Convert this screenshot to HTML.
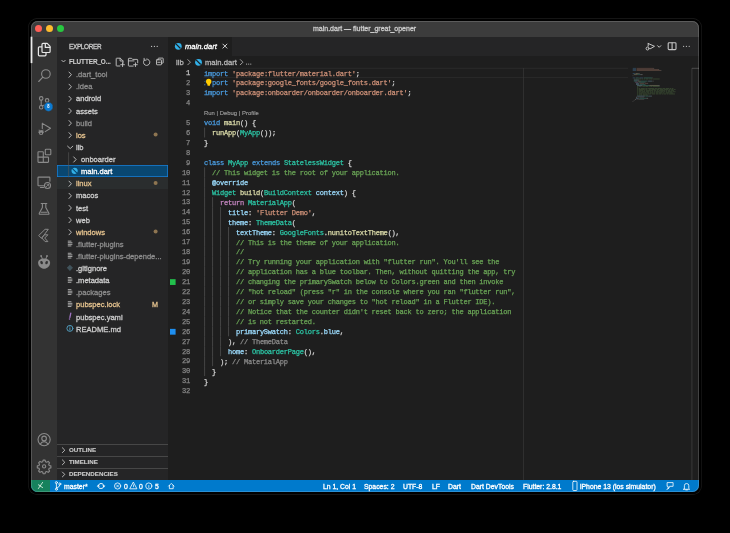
<!DOCTYPE html>
<html><head><meta charset="utf-8"><style>
*{box-sizing:border-box;margin:0;padding:0}
html,body{width:730px;height:533px;background:#000;overflow:hidden}
body{position:relative;font-family:"Liberation Sans",sans-serif;color:#ccc}
.a{position:absolute;white-space:pre}
.t{position:absolute;white-space:pre;line-height:8px;-webkit-text-stroke:0.3px currentColor;will-change:transform}
.c{position:absolute;left:204.3px;font-family:"Liberation Mono",monospace;font-size:7.0px;letter-spacing:-0.21px;white-space:pre;color:#d4d4d4;line-height:9.92px;height:9.92px;-webkit-text-stroke:0.25px currentColor;will-change:transform}
.n{position:absolute;left:160px;width:30px;text-align:right;font-family:"Liberation Mono",monospace;font-size:7.1px;letter-spacing:-0.2px;color:#858585;line-height:9.92px;height:9.92px;-webkit-text-stroke:0.25px currentColor;will-change:transform}
.kw{color:#4a9ce0}.st{color:#ce9178}.ty{color:#2cc6a6}.fn{color:#dcdcaa}.cm{color:#6aa556}.pa{color:#9cdcfe}.ct{color:#c586c0}.lb{color:#8b8b8b}
</style></head><body>
<div class="a" style="left:30.6px;top:20.8px;width:668.90px;height:471.60px;border-radius:6.5px;overflow:hidden;background:#3c3c3c;box-shadow:0 0 0 2.3px #000,0 0 0 2.9px #1c1c1c"><div class="a" style="left:0.00px;top:0.00px;width:668.90px;height:15.90px;background:#3c3c3c;"></div><div class="a" style="left:0.00px;top:15.90px;width:26.80px;height:443.30px;background:#333333;"></div><div class="a" style="left:26.80px;top:15.90px;width:110.40px;height:443.30px;background:#252526;"></div><div class="a" style="left:137.20px;top:15.90px;width:531.70px;height:443.30px;background:#1e1e1e;"></div><div class="a" style="left:0.00px;top:459.20px;width:668.90px;height:12.40px;background:#007acc;"></div><div class="a" style="left:0.00px;top:459.20px;width:19.00px;height:12.40px;background:#16825d;"></div></div><div class="a" style="left:30.6px;top:20.8px;width:668.90px;height:471.60px;border-radius:6.5px;border:0.8px solid rgba(255,255,255,0.17);z-index:5"></div>
<div class="a" style="left:35px;top:25px;width:7px;height:7px;border-radius:50%;background:#ff5f57"></div>
<div class="a" style="left:46px;top:25px;width:7px;height:7px;border-radius:50%;background:#febc2e"></div>
<div class="a" style="left:57px;top:25px;width:7px;height:7px;border-radius:50%;background:#28c840"></div>
<div class="t" style="left:313.4px;top:24.7px;font-size:7px;color:#cccccc">main.dart — flutter_great_opener</div>
<div class="t" style="left:68.7px;top:43.1px;font-size:6.4px;color:#c8c8c8;letter-spacing:-0.32px">EXPLORER</div>
<div class="t" style="left:68.9px;top:58.2px;font-size:6.4px;color:#cccccc;font-weight:bold;-webkit-text-stroke:0.1px currentColor;letter-spacing:-0.1px">FLUTTER_O...</div>
<div class="t" style="left:76.00px;top:71.20px;font-size:7.55px;color:#8c8c8c">.dart_tool</div>
<div class="t" style="left:76.00px;top:83.32px;font-size:7.55px;color:#8c8c8c">.idea</div>
<div class="t" style="left:76.00px;top:95.44px;font-size:7.55px;color:#cccccc">android</div>
<div class="t" style="left:76.00px;top:107.56px;font-size:7.55px;color:#cccccc">assets</div>
<div class="t" style="left:76.00px;top:119.68px;font-size:7.55px;color:#8c8c8c">build</div>
<div class="t" style="left:76.00px;top:131.80px;font-size:7.55px;color:#e2c08d">ios</div>
<div class="t" style="left:76.00px;top:143.92px;font-size:7.55px;color:#cccccc">lib</div>
<div class="t" style="left:80.70px;top:156.04px;font-size:7.55px;color:#cccccc">onboarder</div>
<div class="a" style="left:57.4px;top:164.76px;width:110.4px;height:12.12px;background:#094771;box-shadow:inset 0 0 0 0.75px #1a7fd4"></div>
<div class="t" style="left:80.70px;top:168.16px;font-size:7.55px;color:#ffffff">main.dart</div>
<div class="a" style="left:57.4px;top:176.88px;width:110.4px;height:12.12px;background:#2a2d2e"></div>
<div class="t" style="left:76.00px;top:180.28px;font-size:7.55px;color:#e2c08d">linux</div>
<div class="t" style="left:76.00px;top:192.40px;font-size:7.55px;color:#cccccc">macos</div>
<div class="t" style="left:76.00px;top:204.52px;font-size:7.55px;color:#cccccc">test</div>
<div class="t" style="left:76.00px;top:216.64px;font-size:7.55px;color:#cccccc">web</div>
<div class="t" style="left:76.00px;top:228.76px;font-size:7.55px;color:#e2c08d">windows</div>
<div class="t" style="left:76.00px;top:240.88px;font-size:7.55px;color:#8c8c8c">.flutter-plugins</div>
<div class="t" style="left:76.00px;top:253.00px;font-size:7.55px;color:#8c8c8c">.flutter-plugins-depende...</div>
<div class="t" style="left:76.00px;top:265.12px;font-size:7.55px;color:#cccccc">.gitignore</div>
<div class="t" style="left:76.00px;top:277.24px;font-size:7.55px;color:#cccccc">.metadata</div>
<div class="t" style="left:76.00px;top:289.36px;font-size:7.55px;color:#8c8c8c">.packages</div>
<div class="t" style="left:76.00px;top:301.48px;font-size:7.55px;color:#e2c08d">pubspec.lock</div>
<div class="t" style="left:152.2px;top:301.48px;font-size:7.2px;color:#e2c08d">M</div>
<div class="t" style="left:76.00px;top:313.60px;font-size:7.55px;color:#cccccc">pubspec.yaml</div>
<div class="t" style="left:76.00px;top:325.72px;font-size:7.55px;color:#cccccc">README.md</div>
<div class="a" style="left:57.4px;top:443.60px;width:110.4px;height:0.6px;background:#474747"></div>
<div class="t" style="left:68.9px;top:446.20px;font-size:6.2px;color:#cccccc;font-weight:bold;-webkit-text-stroke:0.1px currentColor">OUTLINE</div>
<div class="a" style="left:57.4px;top:455.72px;width:110.4px;height:0.6px;background:#474747"></div>
<div class="t" style="left:68.9px;top:458.32px;font-size:6.2px;color:#cccccc;font-weight:bold;-webkit-text-stroke:0.1px currentColor">TIMELINE</div>
<div class="a" style="left:57.4px;top:467.84px;width:110.4px;height:0.6px;background:#474747"></div>
<div class="t" style="left:68.9px;top:470.44px;font-size:6.2px;color:#cccccc;font-weight:bold;-webkit-text-stroke:0.1px currentColor">DEPENDENCIES</div>
<svg class="a" style="left:0;top:0" width="730" height="533" viewBox="0 0 730 533" fill="none" stroke-width="0.9" stroke-linecap="round" stroke-linejoin="round"><circle cx="151.6" cy="46.4" r="0.6" fill="#c5c5c5" stroke="none"/><circle cx="154.4" cy="46.4" r="0.6" fill="#c5c5c5" stroke="none"/><circle cx="157.2" cy="46.4" r="0.6" fill="#c5c5c5" stroke="none"/><path d="M69.00 72.06l2.4 2.6-2.4 2.6" stroke="#c5c5c5"/><path d="M69.00 84.18l2.4 2.6-2.4 2.6" stroke="#c5c5c5"/><path d="M69.00 96.30l2.4 2.6-2.4 2.6" stroke="#c5c5c5"/><path d="M69.00 108.42l2.4 2.6-2.4 2.6" stroke="#c5c5c5"/><path d="M69.00 120.54l2.4 2.6-2.4 2.6" stroke="#c5c5c5"/><path d="M69.00 132.66l2.4 2.6-2.4 2.6" stroke="#c5c5c5"/><circle cx="155.6" cy="134.46" r="2" fill="#8e7551" stroke="none"/><path d="M67.60 146.18l2.6 2.4 2.6-2.4" stroke="#c5c5c5"/><path d="M73.70 156.90l2.4 2.6-2.4 2.6" stroke="#c5c5c5"/><circle cx="74.60" cy="170.82" r="3.1" fill="#31b0e8" stroke="none"/><path d="M72.40 168.62l4.3 4.3" stroke="#094771" stroke-width="1.1"/><path d="M69.00 181.14l2.4 2.6-2.4 2.6" stroke="#c5c5c5"/><circle cx="155.6" cy="182.94" r="2" fill="#8e7551" stroke="none"/><path d="M69.00 193.26l2.4 2.6-2.4 2.6" stroke="#c5c5c5"/><path d="M69.00 205.38l2.4 2.6-2.4 2.6" stroke="#c5c5c5"/><path d="M69.00 217.50l2.4 2.6-2.4 2.6" stroke="#c5c5c5"/><path d="M69.00 229.62l2.4 2.6-2.4 2.6" stroke="#c5c5c5"/><circle cx="155.6" cy="231.42" r="2" fill="#8e7551" stroke="none"/><g stroke="#a8a8a8" stroke-width="1.0" stroke-linecap="butt"><path d="M67.80 241.14h3.6M67.80 242.74h4.6M67.80 244.34h4.6M67.80 245.94h3.6"/></g><g stroke="#a8a8a8" stroke-width="1.0" stroke-linecap="butt"><path d="M67.80 253.26h3.6M67.80 254.86h4.6M67.80 256.46h4.6M67.80 258.06h3.6"/></g><path d="M69.90 264.68l3.1 3.1-3.1 3.1-3.1-3.1z" fill="#41535b" stroke="none"/><g stroke="#a8a8a8" stroke-width="1.0" stroke-linecap="butt"><path d="M67.80 277.50h3.6M67.80 279.10h4.6M67.80 280.70h4.6M67.80 282.30h3.6"/></g><g stroke="#a8a8a8" stroke-width="1.0" stroke-linecap="butt"><path d="M67.80 289.62h3.6M67.80 291.22h4.6M67.80 292.82h4.6M67.80 294.42h3.6"/></g><g stroke="#a8a8a8" stroke-width="1.0" stroke-linecap="butt"><path d="M67.80 301.74h3.6M67.80 303.34h4.6M67.80 304.94h4.6M67.80 306.54h3.6"/></g><path d="M70.80 313.06l-0.9 4.4" stroke="#a074c4" stroke-width="1.3"/><circle cx="69.50" cy="318.96" r="0.75" fill="#a074c4" stroke="none"/><circle cx="69.90" cy="328.38" r="3.0" stroke="#519aba" stroke-width="1.0"/><path d="M69.90 327.98v2.1" stroke="#519aba" stroke-width="1.0"/><circle cx="69.90" cy="326.78" r="0.5" fill="#519aba" stroke="none"/><path d="M68.6 152.64 V176.88" stroke="#585858" stroke-width="0.6"/><g stroke="#c5c5c5" stroke-width="0.9">
<path d="M61.8 60.3l1.7 1.7 1.7-1.7"/>
<path d="M119.9 66h-3.2q-0.5 0-0.5-0.5v-6.8q0-0.5 0.5-0.5h3.6l2.7 2.7v2.4M120.1 58.3v2.7h2.8M120.7 64.7h3.7M122.55 62.85v3.7"/>
<path d="M133.2 66.1h-4.2q-0.6 0-0.6-0.6v-6.6q0-0.6 0.6-0.6h2.6l1 1.1h4.5q0.6 0 0.6 0.6v2.8M128.5 60.9h5.5M133.6 64.7h3.7M135.45 62.85v3.7"/>
<path d="M146.6 59a3.2 3.2 0 1 1-2.4 1.1M144.1 58.3v1.9h1.9"/>
<path d="M158.2 59.6v-1q0-0.5 0.5-0.5h4q0.5 0 0.5 0.5v4q0 0.5-0.5 0.5h-1M157 59.8h4q0.5 0 0.5 0.5v4q0 0.5-0.5 0.5h-4q-0.5 0-0.5-0.5v-4q0-0.5 0.5-0.5zM157.8 62.3h2.4"/>
</g><path d="M62.4 447.80l2.4 2.4-2.4 2.4" stroke="#c5c5c5"/><path d="M62.4 459.92l2.4 2.4-2.4 2.4" stroke="#c5c5c5"/><path d="M62.4 472.04l2.4 2.4-2.4 2.4" stroke="#c5c5c5"/></svg>
<div class="a" style="left:232.4px;top:36.7px;width:467px;height:19.3px;background:#252526"></div>
<div class="a" style="left:167.8px;top:36.7px;width:64.6px;height:19.3px;background:#1e1e1e"></div>
<svg class="a" style="left:0;top:0" width="730" height="533" viewBox="0 0 730 533" fill="none"><circle cx="178.3" cy="46.3" r="3.4" fill="#31b0e8"/><path d="M175.9 43.9l4.6 4.6" stroke="#1e1e1e" stroke-width="1.2"/><path d="M222.6 43.8l4.6 4.6M227.2 43.8l-4.6 4.6" stroke="#d0d0d0" stroke-width="1.0"/><g stroke="#c5c5c5" stroke-width="1.0" stroke-linejoin="round" stroke-linecap="round"><path d="M648.2 43.5l6.3 2.8-4.1 2.4M648.2 43.5v2.6"/><circle cx="647.6" cy="48.5" r="1.5"/><path d="M657.6 45.7l1.6 1.6 1.6-1.6"/><rect x="668.2" y="42.7" width="7.8" height="6.9" rx="0.9" stroke-width="1.1"/><path d="M672.1 42.9v6.5" stroke-width="1.1"/></g><circle cx="683.6" cy="46.3" r="0.6" fill="#c5c5c5"/><circle cx="686.4" cy="46.3" r="0.6" fill="#c5c5c5"/><circle cx="689.2" cy="46.3" r="0.6" fill="#c5c5c5"/><path d="M187.8 59.6l2.6 2.6-2.6 2.6M240.3 59.6l2.6 2.6-2.6 2.6" stroke="#b5b5b5" stroke-width="0.85" stroke-linecap="round" stroke-linejoin="round"/><circle cx="198.5" cy="62.3" r="3.4" fill="#31b0e8"/><path d="M196.1 59.9l4.6 4.6" stroke="#1e1e1e" stroke-width="1.2"/><circle cx="246.6" cy="64.1" r="0.6" fill="#b5b5b5"/><circle cx="248.7" cy="64.1" r="0.6" fill="#b5b5b5"/><circle cx="250.8" cy="64.1" r="0.6" fill="#b5b5b5"/><path d="M203.5 68.33H628M203.5 77.47H628" stroke="#2c2c2c" stroke-width="0.8" fill="none"/><path d="M523.50 68V480" stroke="#3a3a3a" stroke-width="0.6"/><path d="M204.60 127.57v9.94" stroke="#4a4a4a" stroke-width="0.9"/><path d="M204.60 167.33v9.94" stroke="#4a4a4a" stroke-width="0.9"/><path d="M204.60 177.27v9.94" stroke="#4a4a4a" stroke-width="0.9"/><path d="M204.60 187.21v9.94" stroke="#4a4a4a" stroke-width="0.9"/><path d="M204.60 197.15v9.94" stroke="#4a4a4a" stroke-width="0.9"/><path d="M212.58 197.15v9.94" stroke="#4a4a4a" stroke-width="0.9"/><path d="M204.60 207.09v9.94" stroke="#4a4a4a" stroke-width="0.9"/><path d="M212.58 207.09v9.94" stroke="#4a4a4a" stroke-width="0.9"/><path d="M220.56 207.09v9.94" stroke="#4a4a4a" stroke-width="0.9"/><path d="M204.60 217.03v9.94" stroke="#4a4a4a" stroke-width="0.9"/><path d="M212.58 217.03v9.94" stroke="#4a4a4a" stroke-width="0.9"/><path d="M220.56 217.03v9.94" stroke="#4a4a4a" stroke-width="0.9"/><path d="M204.60 336.31v9.94" stroke="#4a4a4a" stroke-width="0.9"/><path d="M212.58 336.31v9.94" stroke="#4a4a4a" stroke-width="0.9"/><path d="M220.56 336.31v9.94" stroke="#4a4a4a" stroke-width="0.9"/><path d="M204.60 346.25v9.94" stroke="#4a4a4a" stroke-width="0.9"/><path d="M212.58 346.25v9.94" stroke="#4a4a4a" stroke-width="0.9"/><path d="M220.56 346.25v9.94" stroke="#4a4a4a" stroke-width="0.9"/><path d="M204.60 356.19v9.94" stroke="#4a4a4a" stroke-width="0.9"/><path d="M212.58 356.19v9.94" stroke="#4a4a4a" stroke-width="0.9"/><path d="M204.60 366.13v9.94" stroke="#4a4a4a" stroke-width="0.9"/><path d="M204.60 226.97v9.94" stroke="#4a4a4a" stroke-width="0.9"/><path d="M212.58 226.97v9.94" stroke="#4a4a4a" stroke-width="0.9"/><path d="M220.56 226.97v9.94" stroke="#4a4a4a" stroke-width="0.9"/><path d="M228.54 226.97v9.94" stroke="#4a4a4a" stroke-width="0.9"/><path d="M204.60 236.91v9.94" stroke="#4a4a4a" stroke-width="0.9"/><path d="M212.58 236.91v9.94" stroke="#4a4a4a" stroke-width="0.9"/><path d="M220.56 236.91v9.94" stroke="#4a4a4a" stroke-width="0.9"/><path d="M228.54 236.91v9.94" stroke="#4a4a4a" stroke-width="0.9"/><path d="M204.60 246.85v9.94" stroke="#4a4a4a" stroke-width="0.9"/><path d="M212.58 246.85v9.94" stroke="#4a4a4a" stroke-width="0.9"/><path d="M220.56 246.85v9.94" stroke="#4a4a4a" stroke-width="0.9"/><path d="M228.54 246.85v9.94" stroke="#4a4a4a" stroke-width="0.9"/><path d="M204.60 256.79v9.94" stroke="#4a4a4a" stroke-width="0.9"/><path d="M212.58 256.79v9.94" stroke="#4a4a4a" stroke-width="0.9"/><path d="M220.56 256.79v9.94" stroke="#4a4a4a" stroke-width="0.9"/><path d="M228.54 256.79v9.94" stroke="#4a4a4a" stroke-width="0.9"/><path d="M204.60 266.73v9.94" stroke="#4a4a4a" stroke-width="0.9"/><path d="M212.58 266.73v9.94" stroke="#4a4a4a" stroke-width="0.9"/><path d="M220.56 266.73v9.94" stroke="#4a4a4a" stroke-width="0.9"/><path d="M228.54 266.73v9.94" stroke="#4a4a4a" stroke-width="0.9"/><path d="M204.60 276.67v9.94" stroke="#4a4a4a" stroke-width="0.9"/><path d="M212.58 276.67v9.94" stroke="#4a4a4a" stroke-width="0.9"/><path d="M220.56 276.67v9.94" stroke="#4a4a4a" stroke-width="0.9"/><path d="M228.54 276.67v9.94" stroke="#4a4a4a" stroke-width="0.9"/><path d="M204.60 286.61v9.94" stroke="#4a4a4a" stroke-width="0.9"/><path d="M212.58 286.61v9.94" stroke="#4a4a4a" stroke-width="0.9"/><path d="M220.56 286.61v9.94" stroke="#4a4a4a" stroke-width="0.9"/><path d="M228.54 286.61v9.94" stroke="#4a4a4a" stroke-width="0.9"/><path d="M204.60 296.55v9.94" stroke="#4a4a4a" stroke-width="0.9"/><path d="M212.58 296.55v9.94" stroke="#4a4a4a" stroke-width="0.9"/><path d="M220.56 296.55v9.94" stroke="#4a4a4a" stroke-width="0.9"/><path d="M228.54 296.55v9.94" stroke="#4a4a4a" stroke-width="0.9"/><path d="M204.60 306.49v9.94" stroke="#4a4a4a" stroke-width="0.9"/><path d="M212.58 306.49v9.94" stroke="#4a4a4a" stroke-width="0.9"/><path d="M220.56 306.49v9.94" stroke="#4a4a4a" stroke-width="0.9"/><path d="M228.54 306.49v9.94" stroke="#4a4a4a" stroke-width="0.9"/><path d="M204.60 316.43v9.94" stroke="#4a4a4a" stroke-width="0.9"/><path d="M212.58 316.43v9.94" stroke="#4a4a4a" stroke-width="0.9"/><path d="M220.56 316.43v9.94" stroke="#4a4a4a" stroke-width="0.9"/><path d="M228.54 316.43v9.94" stroke="#4a4a4a" stroke-width="0.9"/><path d="M204.60 326.37v9.94" stroke="#4a4a4a" stroke-width="0.9"/><path d="M212.58 326.37v9.94" stroke="#4a4a4a" stroke-width="0.9"/><path d="M220.56 326.37v9.94" stroke="#4a4a4a" stroke-width="0.9"/><path d="M228.54 326.37v9.94" stroke="#4a4a4a" stroke-width="0.9"/><rect x="170.0" y="279.17" width="5.6" height="5.8" fill="#22c04c"/><rect x="170.0" y="328.87" width="5.6" height="5.8" fill="#1e8ff0"/><path d="M691.9 68V480" stroke="#4a4a4a" stroke-width="0.6"/><path d="M692 68.3h7" stroke="#6a6a6a" stroke-width="0.6"/></svg>
<div class="t" style="left:184.7px;top:42.8px;font-size:7.63px;color:#ffffff;font-style:italic">main.dart</div>
<div class="t" style="left:176px;top:58.8px;font-size:7.63px;color:#b5b5b5">lib</div>
<div class="t" style="left:205px;top:58.8px;font-size:7.63px;color:#b5b5b5">main.dart</div>
<div class="n" style="top:69.23px;color:#c6c6c6">1</div>
<div class="c" style="top:69.53px"><span class="kw">import</span> <span class="st">'package:flutter/material.dart'</span>;</div>
<div class="n" style="top:79.17px;color:#858585">2</div>
<div class="c" style="top:79.47px"><span class="kw">import</span> <span class="st">'package:google_fonts/google_fonts.dart'</span>;</div>
<div class="n" style="top:89.11px;color:#858585">3</div>
<div class="c" style="top:89.41px"><span class="kw">import</span> <span class="st">'package:onboarder/onboarder/onboarder.dart'</span>;</div>
<div class="n" style="top:99.05px;color:#858585">4</div>
<div class="n" style="top:118.93px;color:#858585">5</div>
<div class="c" style="top:119.23px"><span class="kw">void</span> <span class="fn">main</span>() {</div>
<div class="n" style="top:128.87px;color:#858585">6</div>
<div class="c" style="top:129.17px">  <span class="fn">runApp</span>(<span class="ty">MyApp</span>());</div>
<div class="n" style="top:138.81px;color:#858585">7</div>
<div class="c" style="top:139.11px">}</div>
<div class="n" style="top:148.75px;color:#858585">8</div>
<div class="n" style="top:158.69px;color:#858585">9</div>
<div class="c" style="top:158.99px"><span class="kw">class</span> <span class="ty">MyApp</span> <span class="kw">extends</span> <span class="ty">StatelessWidget</span> {</div>
<div class="n" style="top:168.63px;color:#858585">10</div>
<div class="c" style="top:168.93px"><span class="cm">  // This widget is the root of your application.</span></div>
<div class="n" style="top:178.57px;color:#858585">11</div>
<div class="c" style="top:178.87px">  <span class="pa">@override</span></div>
<div class="n" style="top:188.51px;color:#858585">12</div>
<div class="c" style="top:188.81px">  <span class="ty">Widget</span> <span class="fn">build</span>(<span class="ty">BuildContext</span> <span class="pa">context</span>) {</div>
<div class="n" style="top:198.45px;color:#858585">13</div>
<div class="c" style="top:198.75px">    <span class="ct">return</span> <span class="ty">MaterialApp</span>(</div>
<div class="n" style="top:208.39px;color:#858585">14</div>
<div class="c" style="top:208.69px">      <span class="pa">title</span>: <span class="st">'Flutter Demo'</span>,</div>
<div class="n" style="top:218.33px;color:#858585">15</div>
<div class="c" style="top:218.63px">      <span class="pa">theme</span>: <span class="ty">ThemeData</span>(</div>
<div class="n" style="top:228.27px;color:#858585">16</div>
<div class="c" style="top:228.57px">        <span class="pa">textTheme</span>: <span class="ty">GoogleFonts</span>.<span class="fn">nunitoTextTheme</span>(),</div>
<div class="n" style="top:238.21px;color:#858585">17</div>
<div class="c" style="top:238.51px"><span class="cm">        // This is the theme of your application.</span></div>
<div class="n" style="top:248.15px;color:#858585">18</div>
<div class="c" style="top:248.45px"><span class="cm">        //</span></div>
<div class="n" style="top:258.09px;color:#858585">19</div>
<div class="c" style="top:258.39px"><span class="cm">        // Try running your application with "flutter run". You'll see the</span></div>
<div class="n" style="top:268.03px;color:#858585">20</div>
<div class="c" style="top:268.33px"><span class="cm">        // application has a blue toolbar. Then, without quitting the app, try</span></div>
<div class="n" style="top:277.97px;color:#858585">21</div>
<div class="c" style="top:278.27px"><span class="cm">        // changing the primarySwatch below to Colors.green and then invoke</span></div>
<div class="n" style="top:287.91px;color:#858585">22</div>
<div class="c" style="top:288.21px"><span class="cm">        // "hot reload" (press "r" in the console where you ran "flutter run",</span></div>
<div class="n" style="top:297.85px;color:#858585">23</div>
<div class="c" style="top:298.15px"><span class="cm">        // or simply save your changes to "hot reload" in a Flutter IDE).</span></div>
<div class="n" style="top:307.79px;color:#858585">24</div>
<div class="c" style="top:308.09px"><span class="cm">        // Notice that the counter didn't reset back to zero; the application</span></div>
<div class="n" style="top:317.73px;color:#858585">25</div>
<div class="c" style="top:318.03px"><span class="cm">        // is not restarted.</span></div>
<div class="n" style="top:327.67px;color:#858585">26</div>
<div class="c" style="top:327.97px">        <span class="pa">primarySwatch</span>: <span class="ty">Colors</span>.<span class="pa">blue</span>,</div>
<div class="n" style="top:337.61px;color:#858585">27</div>
<div class="c" style="top:337.91px">      ),<span class="lb"> // ThemeData</span></div>
<div class="n" style="top:347.55px;color:#858585">28</div>
<div class="c" style="top:347.85px">      <span class="pa">home</span>: <span class="ty">OnboarderPage</span>(),</div>
<div class="n" style="top:357.49px;color:#858585">29</div>
<div class="c" style="top:357.79px">    );<span class="lb"> // MaterialApp</span></div>
<div class="n" style="top:367.43px;color:#858585">30</div>
<div class="c" style="top:367.73px">  }</div>
<div class="n" style="top:377.37px;color:#858585">31</div>
<div class="c" style="top:377.67px">}</div>
<div class="n" style="top:387.31px;color:#858585">32</div>
<div class="t" style="left:204px;top:108.89px;font-size:5.93px;color:#999999;-webkit-text-stroke:0.15px currentColor">Run | Debug | Profile</div>
<svg class="a" style="left:0;top:0;z-index:2" width="730" height="533" viewBox="0 0 730 533" fill="none"><rect x="205.3" y="78.07" width="6.9" height="9.6" fill="#1e1e1e"/><circle cx="208.7" cy="81.47" r="2.7" fill="#ffcc00"/><path d="M207.1 83.07h3.3l-0.5 2.8h-2.3z" fill="#ffcc00"/></svg>
<svg class="a" style="left:0;top:0" width="730" height="533" viewBox="0 0 730 533"><rect x="632.70" y="67.90" width="3.30" height="0.75" fill="#569cd6" opacity="0.38"/><rect x="636.55" y="67.90" width="17.05" height="0.75" fill="#ce9178" opacity="0.38"/><rect x="653.60" y="67.90" width="0.55" height="0.75" fill="#d4d4d4" opacity="0.38"/><rect x="632.70" y="68.97" width="3.30" height="0.75" fill="#569cd6" opacity="0.38"/><rect x="636.55" y="68.97" width="22.00" height="0.75" fill="#ce9178" opacity="0.38"/><rect x="658.55" y="68.97" width="0.55" height="0.75" fill="#d4d4d4" opacity="0.38"/><rect x="632.70" y="70.04" width="3.30" height="0.75" fill="#569cd6" opacity="0.38"/><rect x="636.55" y="70.04" width="24.20" height="0.75" fill="#ce9178" opacity="0.38"/><rect x="660.75" y="70.04" width="0.55" height="0.75" fill="#d4d4d4" opacity="0.38"/><rect x="632.70" y="73.25" width="2.20" height="0.75" fill="#569cd6" opacity="0.38"/><rect x="635.45" y="73.25" width="2.20" height="0.75" fill="#dcdcaa" opacity="0.38"/><rect x="637.65" y="73.25" width="1.10" height="0.75" fill="#d4d4d4" opacity="0.38"/><rect x="639.30" y="73.25" width="0.55" height="0.75" fill="#d4d4d4" opacity="0.38"/><rect x="633.80" y="74.32" width="3.30" height="0.75" fill="#dcdcaa" opacity="0.38"/><rect x="637.10" y="74.32" width="0.55" height="0.75" fill="#d4d4d4" opacity="0.38"/><rect x="637.65" y="74.32" width="2.75" height="0.75" fill="#4ec9b0" opacity="0.38"/><rect x="640.40" y="74.32" width="2.20" height="0.75" fill="#d4d4d4" opacity="0.38"/><rect x="632.70" y="75.39" width="0.55" height="0.75" fill="#d4d4d4" opacity="0.38"/><rect x="632.70" y="77.53" width="2.75" height="0.75" fill="#569cd6" opacity="0.38"/><rect x="636.00" y="77.53" width="2.75" height="0.75" fill="#4ec9b0" opacity="0.38"/><rect x="639.30" y="77.53" width="3.85" height="0.75" fill="#569cd6" opacity="0.38"/><rect x="643.70" y="77.53" width="8.25" height="0.75" fill="#4ec9b0" opacity="0.38"/><rect x="652.50" y="77.53" width="0.55" height="0.75" fill="#d4d4d4" opacity="0.38"/><rect x="633.80" y="78.60" width="1.10" height="0.75" fill="#6a9955" opacity="0.38"/><rect x="635.45" y="78.60" width="2.20" height="0.75" fill="#6a9955" opacity="0.38"/><rect x="638.20" y="78.60" width="3.30" height="0.75" fill="#6a9955" opacity="0.38"/><rect x="642.05" y="78.60" width="1.10" height="0.75" fill="#6a9955" opacity="0.38"/><rect x="643.70" y="78.60" width="1.65" height="0.75" fill="#6a9955" opacity="0.38"/><rect x="645.90" y="78.60" width="2.20" height="0.75" fill="#6a9955" opacity="0.38"/><rect x="648.65" y="78.60" width="1.10" height="0.75" fill="#6a9955" opacity="0.38"/><rect x="650.30" y="78.60" width="2.20" height="0.75" fill="#6a9955" opacity="0.38"/><rect x="653.05" y="78.60" width="6.60" height="0.75" fill="#6a9955" opacity="0.38"/><rect x="633.80" y="79.67" width="4.95" height="0.75" fill="#9cdcfe" opacity="0.38"/><rect x="633.80" y="80.74" width="3.30" height="0.75" fill="#4ec9b0" opacity="0.38"/><rect x="637.65" y="80.74" width="2.75" height="0.75" fill="#dcdcaa" opacity="0.38"/><rect x="640.40" y="80.74" width="0.55" height="0.75" fill="#d4d4d4" opacity="0.38"/><rect x="640.95" y="80.74" width="6.60" height="0.75" fill="#4ec9b0" opacity="0.38"/><rect x="648.10" y="80.74" width="3.85" height="0.75" fill="#9cdcfe" opacity="0.38"/><rect x="651.95" y="80.74" width="0.55" height="0.75" fill="#d4d4d4" opacity="0.38"/><rect x="653.05" y="80.74" width="0.55" height="0.75" fill="#d4d4d4" opacity="0.38"/><rect x="634.90" y="81.81" width="3.30" height="0.75" fill="#c586c0" opacity="0.38"/><rect x="638.75" y="81.81" width="6.05" height="0.75" fill="#4ec9b0" opacity="0.38"/><rect x="644.80" y="81.81" width="0.55" height="0.75" fill="#d4d4d4" opacity="0.38"/><rect x="636.00" y="82.88" width="2.75" height="0.75" fill="#9cdcfe" opacity="0.38"/><rect x="638.75" y="82.88" width="0.55" height="0.75" fill="#d4d4d4" opacity="0.38"/><rect x="639.85" y="82.88" width="4.40" height="0.75" fill="#ce9178" opacity="0.38"/><rect x="644.80" y="82.88" width="2.75" height="0.75" fill="#ce9178" opacity="0.38"/><rect x="647.55" y="82.88" width="0.55" height="0.75" fill="#d4d4d4" opacity="0.38"/><rect x="636.00" y="83.95" width="2.75" height="0.75" fill="#9cdcfe" opacity="0.38"/><rect x="638.75" y="83.95" width="0.55" height="0.75" fill="#d4d4d4" opacity="0.38"/><rect x="639.85" y="83.95" width="4.95" height="0.75" fill="#4ec9b0" opacity="0.38"/><rect x="644.80" y="83.95" width="0.55" height="0.75" fill="#d4d4d4" opacity="0.38"/><rect x="637.10" y="85.02" width="4.95" height="0.75" fill="#9cdcfe" opacity="0.38"/><rect x="642.05" y="85.02" width="0.55" height="0.75" fill="#d4d4d4" opacity="0.38"/><rect x="643.15" y="85.02" width="6.05" height="0.75" fill="#4ec9b0" opacity="0.38"/><rect x="649.20" y="85.02" width="0.55" height="0.75" fill="#d4d4d4" opacity="0.38"/><rect x="649.75" y="85.02" width="8.25" height="0.75" fill="#dcdcaa" opacity="0.38"/><rect x="658.00" y="85.02" width="1.65" height="0.75" fill="#d4d4d4" opacity="0.38"/><rect x="637.10" y="86.09" width="1.10" height="0.75" fill="#6a9955" opacity="0.38"/><rect x="638.75" y="86.09" width="2.20" height="0.75" fill="#6a9955" opacity="0.38"/><rect x="641.50" y="86.09" width="1.10" height="0.75" fill="#6a9955" opacity="0.38"/><rect x="643.15" y="86.09" width="1.65" height="0.75" fill="#6a9955" opacity="0.38"/><rect x="645.35" y="86.09" width="2.75" height="0.75" fill="#6a9955" opacity="0.38"/><rect x="648.65" y="86.09" width="1.10" height="0.75" fill="#6a9955" opacity="0.38"/><rect x="650.30" y="86.09" width="2.20" height="0.75" fill="#6a9955" opacity="0.38"/><rect x="653.05" y="86.09" width="6.60" height="0.75" fill="#6a9955" opacity="0.38"/><rect x="637.10" y="87.16" width="1.10" height="0.75" fill="#6a9955" opacity="0.38"/><rect x="637.10" y="88.23" width="1.10" height="0.75" fill="#6a9955" opacity="0.38"/><rect x="638.75" y="88.23" width="1.65" height="0.75" fill="#6a9955" opacity="0.38"/><rect x="640.95" y="88.23" width="3.85" height="0.75" fill="#6a9955" opacity="0.38"/><rect x="645.35" y="88.23" width="2.20" height="0.75" fill="#6a9955" opacity="0.38"/><rect x="648.10" y="88.23" width="6.05" height="0.75" fill="#6a9955" opacity="0.38"/><rect x="654.70" y="88.23" width="2.20" height="0.75" fill="#6a9955" opacity="0.38"/><rect x="657.45" y="88.23" width="4.40" height="0.75" fill="#6a9955" opacity="0.38"/><rect x="662.40" y="88.23" width="2.75" height="0.75" fill="#6a9955" opacity="0.38"/><rect x="665.70" y="88.23" width="3.30" height="0.75" fill="#6a9955" opacity="0.38"/><rect x="669.55" y="88.23" width="1.65" height="0.75" fill="#6a9955" opacity="0.38"/><rect x="671.75" y="88.23" width="1.65" height="0.75" fill="#6a9955" opacity="0.38"/><rect x="637.10" y="89.30" width="1.10" height="0.75" fill="#6a9955" opacity="0.38"/><rect x="638.75" y="89.30" width="6.05" height="0.75" fill="#6a9955" opacity="0.38"/><rect x="645.35" y="89.30" width="1.65" height="0.75" fill="#6a9955" opacity="0.38"/><rect x="647.55" y="89.30" width="0.55" height="0.75" fill="#6a9955" opacity="0.38"/><rect x="648.65" y="89.30" width="2.20" height="0.75" fill="#6a9955" opacity="0.38"/><rect x="651.40" y="89.30" width="4.40" height="0.75" fill="#6a9955" opacity="0.38"/><rect x="656.35" y="89.30" width="2.75" height="0.75" fill="#6a9955" opacity="0.38"/><rect x="659.65" y="89.30" width="3.85" height="0.75" fill="#6a9955" opacity="0.38"/><rect x="664.05" y="89.30" width="4.40" height="0.75" fill="#6a9955" opacity="0.38"/><rect x="669.00" y="89.30" width="1.65" height="0.75" fill="#6a9955" opacity="0.38"/><rect x="671.20" y="89.30" width="2.20" height="0.75" fill="#6a9955" opacity="0.38"/><rect x="673.95" y="89.30" width="1.65" height="0.75" fill="#6a9955" opacity="0.38"/><rect x="637.10" y="90.37" width="1.10" height="0.75" fill="#6a9955" opacity="0.38"/><rect x="638.75" y="90.37" width="4.40" height="0.75" fill="#6a9955" opacity="0.38"/><rect x="643.70" y="90.37" width="1.65" height="0.75" fill="#6a9955" opacity="0.38"/><rect x="645.90" y="90.37" width="7.15" height="0.75" fill="#6a9955" opacity="0.38"/><rect x="653.60" y="90.37" width="2.75" height="0.75" fill="#6a9955" opacity="0.38"/><rect x="656.90" y="90.37" width="1.10" height="0.75" fill="#6a9955" opacity="0.38"/><rect x="658.55" y="90.37" width="6.60" height="0.75" fill="#6a9955" opacity="0.38"/><rect x="665.70" y="90.37" width="1.65" height="0.75" fill="#6a9955" opacity="0.38"/><rect x="667.90" y="90.37" width="2.20" height="0.75" fill="#6a9955" opacity="0.38"/><rect x="670.65" y="90.37" width="3.30" height="0.75" fill="#6a9955" opacity="0.38"/><rect x="637.10" y="91.44" width="1.10" height="0.75" fill="#6a9955" opacity="0.38"/><rect x="638.75" y="91.44" width="2.20" height="0.75" fill="#6a9955" opacity="0.38"/><rect x="641.50" y="91.44" width="3.85" height="0.75" fill="#6a9955" opacity="0.38"/><rect x="645.90" y="91.44" width="3.30" height="0.75" fill="#6a9955" opacity="0.38"/><rect x="649.75" y="91.44" width="1.65" height="0.75" fill="#6a9955" opacity="0.38"/><rect x="651.95" y="91.44" width="1.10" height="0.75" fill="#6a9955" opacity="0.38"/><rect x="653.60" y="91.44" width="1.65" height="0.75" fill="#6a9955" opacity="0.38"/><rect x="655.80" y="91.44" width="3.85" height="0.75" fill="#6a9955" opacity="0.38"/><rect x="660.20" y="91.44" width="2.75" height="0.75" fill="#6a9955" opacity="0.38"/><rect x="663.50" y="91.44" width="1.65" height="0.75" fill="#6a9955" opacity="0.38"/><rect x="665.70" y="91.44" width="1.65" height="0.75" fill="#6a9955" opacity="0.38"/><rect x="667.90" y="91.44" width="4.40" height="0.75" fill="#6a9955" opacity="0.38"/><rect x="672.85" y="91.44" width="2.75" height="0.75" fill="#6a9955" opacity="0.38"/><rect x="637.10" y="92.51" width="1.10" height="0.75" fill="#6a9955" opacity="0.38"/><rect x="638.75" y="92.51" width="1.10" height="0.75" fill="#6a9955" opacity="0.38"/><rect x="640.40" y="92.51" width="3.30" height="0.75" fill="#6a9955" opacity="0.38"/><rect x="644.25" y="92.51" width="2.20" height="0.75" fill="#6a9955" opacity="0.38"/><rect x="647.00" y="92.51" width="2.20" height="0.75" fill="#6a9955" opacity="0.38"/><rect x="649.75" y="92.51" width="3.85" height="0.75" fill="#6a9955" opacity="0.38"/><rect x="654.15" y="92.51" width="1.10" height="0.75" fill="#6a9955" opacity="0.38"/><rect x="655.80" y="92.51" width="2.20" height="0.75" fill="#6a9955" opacity="0.38"/><rect x="658.55" y="92.51" width="3.85" height="0.75" fill="#6a9955" opacity="0.38"/><rect x="662.95" y="92.51" width="1.10" height="0.75" fill="#6a9955" opacity="0.38"/><rect x="664.60" y="92.51" width="0.55" height="0.75" fill="#6a9955" opacity="0.38"/><rect x="665.70" y="92.51" width="3.85" height="0.75" fill="#6a9955" opacity="0.38"/><rect x="670.10" y="92.51" width="2.75" height="0.75" fill="#6a9955" opacity="0.38"/><rect x="637.10" y="93.58" width="1.10" height="0.75" fill="#6a9955" opacity="0.38"/><rect x="638.75" y="93.58" width="3.30" height="0.75" fill="#6a9955" opacity="0.38"/><rect x="642.60" y="93.58" width="2.20" height="0.75" fill="#6a9955" opacity="0.38"/><rect x="645.35" y="93.58" width="1.65" height="0.75" fill="#6a9955" opacity="0.38"/><rect x="647.55" y="93.58" width="3.85" height="0.75" fill="#6a9955" opacity="0.38"/><rect x="651.95" y="93.58" width="3.30" height="0.75" fill="#6a9955" opacity="0.38"/><rect x="655.80" y="93.58" width="2.75" height="0.75" fill="#6a9955" opacity="0.38"/><rect x="659.10" y="93.58" width="2.20" height="0.75" fill="#6a9955" opacity="0.38"/><rect x="661.85" y="93.58" width="1.10" height="0.75" fill="#6a9955" opacity="0.38"/><rect x="663.50" y="93.58" width="2.75" height="0.75" fill="#6a9955" opacity="0.38"/><rect x="666.80" y="93.58" width="1.65" height="0.75" fill="#6a9955" opacity="0.38"/><rect x="669.00" y="93.58" width="6.05" height="0.75" fill="#6a9955" opacity="0.38"/><rect x="637.10" y="94.65" width="1.10" height="0.75" fill="#6a9955" opacity="0.38"/><rect x="638.75" y="94.65" width="1.10" height="0.75" fill="#6a9955" opacity="0.38"/><rect x="640.40" y="94.65" width="1.65" height="0.75" fill="#6a9955" opacity="0.38"/><rect x="642.60" y="94.65" width="5.50" height="0.75" fill="#6a9955" opacity="0.38"/><rect x="637.10" y="95.72" width="7.15" height="0.75" fill="#9cdcfe" opacity="0.38"/><rect x="644.25" y="95.72" width="0.55" height="0.75" fill="#d4d4d4" opacity="0.38"/><rect x="645.35" y="95.72" width="3.30" height="0.75" fill="#4ec9b0" opacity="0.38"/><rect x="648.65" y="95.72" width="0.55" height="0.75" fill="#d4d4d4" opacity="0.38"/><rect x="649.20" y="95.72" width="2.20" height="0.75" fill="#9cdcfe" opacity="0.38"/><rect x="651.40" y="95.72" width="0.55" height="0.75" fill="#d4d4d4" opacity="0.38"/><rect x="636.00" y="96.79" width="1.10" height="0.75" fill="#d4d4d4" opacity="0.38"/><rect x="637.65" y="96.79" width="1.10" height="0.75" fill="#858585" opacity="0.38"/><rect x="639.30" y="96.79" width="4.95" height="0.75" fill="#858585" opacity="0.38"/><rect x="636.00" y="97.86" width="2.20" height="0.75" fill="#9cdcfe" opacity="0.38"/><rect x="638.20" y="97.86" width="0.55" height="0.75" fill="#d4d4d4" opacity="0.38"/><rect x="639.30" y="97.86" width="7.15" height="0.75" fill="#4ec9b0" opacity="0.38"/><rect x="646.45" y="97.86" width="1.65" height="0.75" fill="#d4d4d4" opacity="0.38"/><rect x="634.90" y="98.93" width="1.10" height="0.75" fill="#d4d4d4" opacity="0.38"/><rect x="636.55" y="98.93" width="1.10" height="0.75" fill="#858585" opacity="0.38"/><rect x="638.20" y="98.93" width="6.05" height="0.75" fill="#858585" opacity="0.38"/><rect x="633.80" y="100.00" width="0.55" height="0.75" fill="#d4d4d4" opacity="0.38"/><rect x="632.70" y="101.07" width="0.55" height="0.75" fill="#d4d4d4" opacity="0.38"/></svg>
<div class="t" style="left:64.0px;top:482.5px;font-size:6.85px;color:#ffffff">master*</div>
<div class="t" style="left:123.6px;top:482.5px;font-size:6.85px;color:#ffffff">0</div>
<div class="t" style="left:139.0px;top:482.5px;font-size:6.85px;color:#ffffff">0</div>
<div class="t" style="left:154.9px;top:482.5px;font-size:6.85px;color:#ffffff">5</div>
<div class="t" style="left:323.3px;top:482.5px;font-size:6.85px;color:#ffffff">Ln 1, Col 1</div>
<div class="t" style="left:363.6px;top:482.5px;font-size:6.85px;color:#ffffff">Spaces: 2</div>
<div class="t" style="left:403.3px;top:482.5px;font-size:6.85px;color:#ffffff">UTF-8</div>
<div class="t" style="left:432.3px;top:482.5px;font-size:6.85px;color:#ffffff">LF</div>
<div class="t" style="left:448.0px;top:482.5px;font-size:6.85px;color:#ffffff">Dart</div>
<div class="t" style="left:471.0px;top:482.5px;font-size:6.85px;color:#ffffff">Dart DevTools</div>
<div class="t" style="left:523.4px;top:482.5px;font-size:6.85px;color:#ffffff">Flutter: 2.8.1</div>
<div class="t" style="left:580.1px;top:482.5px;font-size:6.85px;color:#ffffff">iPhone 13 (ios simulator)</div>
<svg class="a" style="left:0;top:0" width="730" height="533" viewBox="0 0 730 533" fill="none"><g stroke="#ffffff" stroke-width="0.8" fill="none" stroke-linecap="round" stroke-linejoin="round"><path d="M42.6 482.4L38.4 488.5M38.4 484.8l2.1 1.1M40.5 486.3l2.1 1.2" stroke="#d8ecdf" stroke-width="0.9"/><circle cx="56.4" cy="482.6" r="1.05"/><circle cx="56.4" cy="489.2" r="1.05"/><circle cx="59.8" cy="484" r="1.05"/><path d="M56.4 483.7v4.4M59.8 485.1q0 2.2-3.4 2.9"/><path d="M98.2 486L99.8 483.6H102.4L104 486L102.4 488.4H99.8Z" stroke-width="0.9"/><path d="M97.4 486l1-1.3 0.9 1.6zM104.8 486l-1 1.3-0.9-1.6z" fill="#fff" stroke-width="0.4"/><circle cx="117.6" cy="486" r="3.1"/><path d="M116.5 484.9l2.2 2.2M118.7 484.9l-2.2 2.2" stroke-width="0.7"/><path d="M133.5 482.4l3.4 6.4h-6.8z"/><path d="M133.5 484.9v1.9" stroke-width="0.7"/><circle cx="148.8" cy="486" r="3.1"/><path d="M148.8 485.5v2" stroke-width="0.7"/><path d="M168.6 486.1l2.7-2.7 2.7 2.7M169.4 485.4v3.3h3.8v-3.3"/><rect x="572.8" y="481.3" width="4.2" height="9.2" rx="0.8"/><path d="M667.5 482.6h5.6v3.7h-3.4l-1.6 2.6v-2.6h-0.6z"/><path d="M666.8 489.8l2.2-2.2" /><path d="M684.4 488.6v-2.9a2.2 2.2 0 0 1 4.4 0v2.9l0.8 0.7h-6z"/><path d="M685.8 489.9h1.6"/></g></svg>
<svg class="a" style="left:0;top:0" width="730" height="533" viewBox="0 0 730 533" fill="none" stroke="#8b8b8b" stroke-width="1.1" stroke-linejoin="round" stroke-linecap="round">
  <rect x="30.6" y="36.7" width="1.8" height="26.4" fill="#e6e6e6" stroke="none"/>
  <g stroke="#e8e8e8" stroke-width="1.2">
    <path d="M43 43.4h4.2l2.9 2.9v5.2q0 1 -1 1h-6.1q-1 0 -1-1v-7.1q0-1 1-1z"/>
    <path d="M45.3 43.6v3.8h4.6"/>
    <path d="M41.7 46.8h-2.3q-1 0-1 1v7q0 1 1 1h5.6q1 0 1-1v-2.3"/>
  </g>
  <circle cx="45.9" cy="74" r="4.3"/><path d="M42.8 77.2L38.7 81.5"/>
  <circle cx="41.2" cy="98.4" r="1.75"/><circle cx="41.2" cy="107.3" r="1.75"/><circle cx="47.1" cy="100.4" r="1.75"/>
  <path d="M41.2 100.2v5.3"/><path d="M47.1 102.2q0 2.6-3 3.2q-2.9 0.6-2.9 0.1"/>
  <path d="M42.3 123.4v5M42.3 123.4l8.2 4.9-5.3 3.3"/>
  <g fill="#8b8b8b" stroke="none"><ellipse cx="41.1" cy="132.6" rx="2.3" ry="2.5"/><rect x="38.2" y="131.6" width="5.8" height="0.9"/><rect x="38.6" y="129.6" width="0.9" height="1.4" transform="rotate(-35 39 130)"/><rect x="42.6" y="129.6" width="0.9" height="1.4" transform="rotate(35 43 130)"/></g>
  <circle cx="41.1" cy="133.3" r="0.9" fill="#333" stroke="none"/>
  <path d="M38.6 151.7h4.1q0.6 0 0.6 0.6v4.8h4.6q0.6 0 0.6 0.6v4.1q0 0.6-0.6 0.6h-9.3q-0.6 0-0.6-0.6v-9.5q0-0.6 0.6-0.6z"/><path d="M43.3 157.1h-5.2M43.3 157.1v5.3"/>
  <rect x="45.3" y="149.3" width="5.5" height="5.5" rx="0.8"/>
  <path d="M44 185.8h-5.4q-0.6 0-0.6-0.6v-7.5q0-0.6 0.6-0.6h10.7q0.6 0 0.6 0.6v3.6"/><path d="M40.4 187.5h3.2"/>
  <circle cx="47.5" cy="185.5" r="3"/><path d="M46.3 186.7l2.3-2.3M47 184.3h1.6v1.6" stroke-width="0.8"/>
  <path d="M41.2 203.5h5.6M42.4 203.5v4L39.3 213.3q-0.4 0.9 0.5 0.9h8.6q0.9 0 0.5-0.9L45.8 207.5v-4"/><path d="M41.2 212.3h5.9"/>
  <path d="M47.9 229.3h-2.8l-6.4 6.2 2.6 2.6zM41.9 238l3.2 3.6h2.8l-3.2-3.6 3.2-3.2h-2.8z" stroke-width="1"/>
  <path d="M44.1 258.6c3.6 0 6 1.8 6 4.3c0 3-3.2 5.8-6 5.8s-6-2.8-6-5.8c0-2.5 2.4-4.3 6-4.3z" fill="#8b8b8b" stroke="none"/>
  <ellipse cx="41.6" cy="262.6" rx="1.25" ry="1.7" fill="#333" stroke="none" transform="rotate(-25 41.6 262.6)"/><ellipse cx="46.6" cy="262.6" rx="1.25" ry="1.7" fill="#333" stroke="none" transform="rotate(25 46.6 262.6)"/>
  <path d="M42.3 258.9l-0.9-2.6M45.9 258.9l0.9-2.6" stroke-width="0.9"/><circle cx="41.1" cy="256" r="0.9" fill="#8b8b8b" stroke="none"/><circle cx="47" cy="256" r="0.9" fill="#8b8b8b" stroke="none"/>
  <circle cx="44.1" cy="439.6" r="6.1"/><circle cx="44.1" cy="438.4" r="2.3"/><path d="M40.2 444.3q1.5-2.7 3.9-2.7t3.9 2.7"/>
  <path d="M43.1 460.1h2l0.4 1.7 1.2 0.5 1.5-0.9 1.4 1.4-0.9 1.5 0.5 1.2 1.7 0.4v2l-1.7 0.4-0.5 1.2 0.9 1.5-1.4 1.4-1.5-0.9-1.2 0.5-0.4 1.7h-2l-0.4-1.7-1.2-0.5-1.5 0.9-1.4-1.4 0.9-1.5-0.5-1.2-1.7-0.4v-2l1.7-0.4 0.5-1.2-0.9-1.5 1.4-1.4 1.5 0.9 1.2-0.5z"/><circle cx="44.1" cy="466.4" r="1.6"/>
  <circle cx="48.5" cy="106.8" r="4.6" fill="#0b7ad1" stroke="#333" stroke-width="0.5"/>
</svg>
<div class="a" style="left:44px;top:103.2px;width:9px;text-align:center;font-size:4.8px;line-height:7.6px;color:#fff;font-weight:bold;transform:scaleX(0.85)">8</div>
</body></html>
